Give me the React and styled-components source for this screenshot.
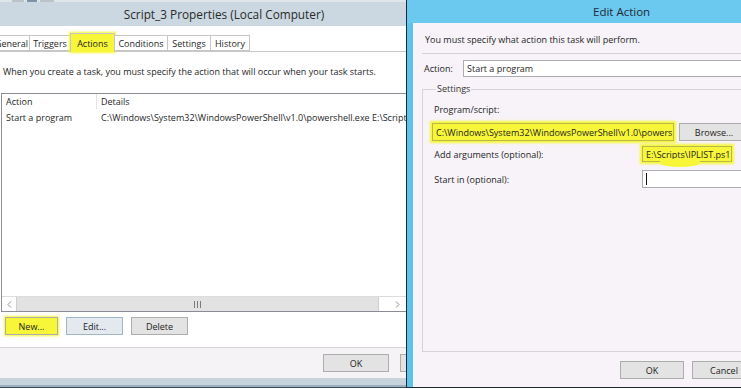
import React from 'react';
import styled, { createGlobalStyle } from 'styled-components';

const GlobalStyle = createGlobalStyle`
    html, body {
        margin: 0;
        padding: 0;
        background: #ffffff;
    }
    body {
        font-family: "Open Sans", "Noto Sans", sans-serif;
        font-size: 9px;
        color: #1f1f1f;
    }
`;

const HL = '#f7f639';

const Desktop = styled.div`
    display: flex;
    width: 741px;
    height: 389px;
    overflow: hidden;
    background: #ffffff;
`;

/* ---------- left: task properties ---------- */

const LeftWindow = styled.div`
    flex: 0 0 406px;
    display: flex;
    flex-direction: column;
    overflow: hidden;
    background: #ffffff;
`;

const TopStrip = styled.div`
    height: 2px;
    display: flex;
    gap: 3px;
    padding-left: 12px;
    background: #dfe6ea;
`;

const StripMark = styled.span`
    width: ${p => p.w}px;
    background: ${p => p.c};
`;

const LeftTitle = styled.div`
    height: 24px;
    display: flex;
    align-items: center;
    justify-content: center;
    padding-left: 42px;
    background: #cbd8e1;
    font-size: 11.8px;
    color: #2a2a2a;
`;

const LeftBody = styled.div`
    display: flex;
    flex-direction: column;
    padding-left: 1px;
`;

const TabRow = styled.div`
    display: flex;
    align-items: flex-end;
    height: 19px;
    margin-top: 6px;
    margin-left: -8px;
    border-bottom: 1px solid #c9c9c9;
`;

const Tab = styled.div`
    height: ${p => (p.selected ? 19 : 16)}px;
    width: ${p => p.w}px;
    flex-shrink: 0;
    box-sizing: border-box;
    display: flex;
    align-items: center;
    justify-content: center;
    border: 1px solid #c6c6c6;
    border-bottom: ${p => (p.selected ? 'none' : '1px solid #c6c6c6')};
    margin-bottom: ${p => (p.selected ? -1 : 0)}px;
    margin-right: -1px;
    background: ${p => (p.selected ? HL : '#ffffff')};
    box-shadow: ${p => (p.selected ? `0 0 2px 1px ${HL}` : 'none')};
    white-space: nowrap;
    position: relative;
`;

const Intro = styled.div`
    margin-top: 13px;
    padding-left: 2px;
    line-height: 14px;
    white-space: nowrap;
`;

const ListView = styled.div`
    margin-top: 14px;
    height: 219px;
    box-sizing: border-box;
    border: 1px solid #8a8d94;
    border-right: none;
    display: flex;
    flex-direction: column;
`;

const ListHeader = styled.div`
    display: flex;
    height: 15px;
    align-items: center;
`;

const ListRowLine = styled.div`
    display: flex;
    height: 16px;
    align-items: center;
`;

const Cell = styled.div`
    flex: 0 0 ${p => p.w || 'auto'};
    ${p => (p.w ? `width: ${p.w};` : '')}
    box-sizing: border-box;
    padding-left: 4px;
    white-space: nowrap;
    overflow: hidden;
    height: 100%;
    display: flex;
    align-items: center;
    border-right: ${p => (p.divider ? '1px solid #e3e3e3' : 'none')};
`;

const ListFill = styled.div`
    flex: 1;
`;

const HScroll = styled.div`
    height: 14px;
    display: flex;
    border-top: 1px solid #dcdcdc;
    background: #ffffff;
`;

const ScrollArrow = styled.div`
    width: ${p => p.w}px;
    display: flex;
    align-items: center;
    justify-content: ${p => p.justify || 'center'};
    padding-right: ${p => p.pr || 0}px;
    box-sizing: border-box;
`;

const ScrollThumb = styled.div`
    flex: 1;
    display: flex;
    align-items: center;
    justify-content: center;
    background: #e2e2e2;
    border-left: 1px solid #cfcfcf;
    border-right: 1px solid #cfcfcf;
`;

const ButtonRow = styled.div`
    display: flex;
    gap: 8px;
    margin-top: 5px;
    padding-left: 4px;
`;

const Button = styled.div`
    width: ${p => p.w}px;
    height: 18px;
    flex-shrink: 0;
    box-sizing: border-box;
    display: flex;
    align-items: center;
    justify-content: center;
    border: 1px solid ${p => (p.focus ? '#9fb6cb' : '#adadad')};
    background: ${p => (p.hl ? HL : p.focus ? '#e3e9ef' : '#e3e3e3')};
    box-shadow: ${p => (p.hl ? `0 0 2px 1px ${HL}` : 'none')};
    color: #222;
`;

const LeftFooter = styled.div`
    margin-top: 12px;
    height: 31px;
    border-top: 1px solid #d8d4da;
    background: #f6f3f7;
    display: flex;
    gap: 11px;
    padding: 6px 0 0 323px;
    box-sizing: border-box;
`;

const BottomStrip = styled.div`
    height: 9px;
    background: #c6d3dc;
    border-bottom: 1px solid #3c4852;
    box-shadow: inset 0 -2px 0 #9fb0bd;
`;

/* ---------- right: edit action ---------- */

const RightWindow = styled.div`
    flex: 0 0 362px;
    height: 388px;
    box-sizing: border-box;
    display: flex;
    flex-direction: column;
    border-left: 1px solid #1b2b3c;
    border-bottom: 1px solid #1b2b3c;
    background: #5ec3ea;
    padding: 0 6px 0 6px;
`;

const RightTitle = styled.div`
    height: 23px;
    display: flex;
    align-items: center;
    padding-left: 186px;
    font-size: 11.5px;
    color: #1d2a35;
    background: #6bc8ee;
    margin: 0 -6px;
`;

const RightBody = styled.div`
    flex: 1;
    display: flex;
    flex-direction: column;
    background: #f7f3f8;
    padding: 10px 9px 0 9px;
`;

const Lead = styled.div`
    padding-left: 3px;
    line-height: 14px;
    white-space: nowrap;
`;

const Rule = styled.div`
    margin-top: 6px;
    border-top: 1px solid #d2d0d3;
`;

const ActionLine = styled.div`
    display: flex;
    align-items: center;
    margin-top: 6px;
    padding-left: 2px;
`;

const FieldLabel = styled.div`
    flex: 0 0 ${p => p.w}px;
    white-space: nowrap;
`;

const Field = styled.div`
    flex: 0 0 ${p => p.w || 'auto'}px;
    ${p => (p.grow ? 'flex: 1;' : '')}
    height: ${p => p.h || 17}px;
    box-sizing: border-box;
    display: flex;
    align-items: center;
    padding-left: 3px;
    border: 1px solid ${p => (p.hl ? '#b9b94a' : '#abadb3')};
    background: ${p => (p.hl ? HL : '#ffffff')};
    box-shadow: ${p => (p.hl ? `0 0 2px 2px ${HL}` : 'none')};
    white-space: nowrap;
    overflow: hidden;
    position: relative;
`;

const Caret = styled.span`
    width: 1px;
    height: 12px;
    background: #111;
`;

const Group = styled.fieldset`
    margin: 5px 0 0 0;
    padding: 7px 0 0 9px;
    border: 1px solid #d6d3d8;
    height: 270px;
    box-sizing: border-box;
    display: flex;
    flex-direction: column;
`;

const Legend = styled.legend`
    padding: 0 1px;
    margin-left: 4px;
    line-height: 14px;
    color: #333;
`;

const GroupLabel = styled.div`
    line-height: 14px;
    padding-left: 2px;
`;

const FieldRow = styled.div`
    display: flex;
    align-items: center;
    gap: ${p => p.gap || 0}px;
    margin-top: ${p => p.mt}px;
`;

const ArgsMark = styled.div`
    position: relative;
    &::after {
        content: '';
        position: absolute;
        left: 18px;
        top: 13px;
        width: 40px;
        height: 8px;
        border-radius: 0 0 50% 50%;
        background: ${HL};
    }
`;

const RightFooter = styled.div`
    display: flex;
    justify-content: flex-end;
    gap: 8px;
    padding: 9px 0 0 0;
    margin-right: -3px;
    height: 34px;
    box-sizing: border-box;
`;

const Chevron = ({ dir }) => (
    <svg width="5" height="7" viewBox="0 0 5 7">
        <path
            d={dir === 'left' ? 'M4 0.5 L1 3.5 L4 6.5' : 'M1 0.5 L4 3.5 L1 6.5'}
            fill="none"
            stroke="#8a8a8a"
            strokeWidth="1"
        />
    </svg>
);

const Grip = () => (
    <svg width="7" height="7" viewBox="0 0 7 7">
        <rect x="0" y="0" width="1" height="7" fill="#7b7b7b" />
        <rect x="3" y="0" width="1" height="7" fill="#7b7b7b" />
        <rect x="6" y="0" width="1" height="7" fill="#7b7b7b" />
    </svg>
);

const tabs = [
    { label: 'General', w: 37 },
    { label: 'Triggers', w: 42 },
    { label: 'Actions', w: 45, selected: true },
    { label: 'Conditions', w: 54 },
    { label: 'Settings', w: 44 },
    { label: 'History', w: 40 },
];

export default function App() {
    return (
        <>
            <GlobalStyle />
            <Desktop>
                <LeftWindow>
                    <TopStrip>
                        <StripMark w={12} c="#b9c3cb" />
                        <StripMark w={10} c="#7d93a8" />
                        <StripMark w={14} c="#b9c3cb" />
                    </TopStrip>
                    <LeftTitle>Script_3 Properties (Local Computer)</LeftTitle>
                    <LeftBody>
                        <TabRow>
                            {tabs.map(t => (
                                <Tab key={t.label} w={t.w} selected={t.selected}>
                                    {t.label}
                                </Tab>
                            ))}
                        </TabRow>
                        <Intro>
                            When you create a task, you must specify the action that will occur when your task starts.
                        </Intro>
                        <ListView>
                            <ListHeader>
                                <Cell w="95px" divider>Action</Cell>
                                <Cell>Details</Cell>
                            </ListHeader>
                            <ListRowLine>
                                <Cell w="95px">Start a program</Cell>
                                <Cell>C:\Windows\System32\WindowsPowerShell\v1.0\powershell.exe E:\Scripts</Cell>
                            </ListRowLine>
                            <ListFill />
                            <HScroll>
                                <ScrollArrow w={14}><Chevron dir="left" /></ScrollArrow>
                                <ScrollThumb><Grip /></ScrollThumb>
                                <ScrollArrow w={27} justify="flex-end" pr={6}><Chevron dir="right" /></ScrollArrow>
                            </HScroll>
                        </ListView>
                        <ButtonRow>
                            <Button w={53} hl>New...</Button>
                            <Button w={57} focus>Edit...</Button>
                            <Button w={57}>Delete</Button>
                        </ButtonRow>
                    </LeftBody>
                    <LeftFooter>
                        <Button w={66}>OK</Button>
                        <Button w={66} />
                    </LeftFooter>
                    <BottomStrip />
                </LeftWindow>

                <RightWindow>
                    <RightTitle>Edit Action</RightTitle>
                    <RightBody>
                        <Lead>You must specify what action this task will perform.</Lead>
                        <Rule />
                        <ActionLine>
                            <FieldLabel w={39}>Action:</FieldLabel>
                            <Field grow>Start a program</Field>
                        </ActionLine>
                        <Group>
                            <Legend>Settings</Legend>
                            <GroupLabel>Program/script:</GroupLabel>
                            <FieldRow mt={6} gap={5}>
                                <Field w={242} h={18} hl>C:\Windows\System32\WindowsPowerShell\v1.0\powers</Field>
                                <Button w={70}>Browse...</Button>
                            </FieldRow>
                            <FieldRow mt={5}>
                                <FieldLabel w={210}>&nbsp;Add arguments (optional):</FieldLabel>
                                <ArgsMark>
                                    <Field w={110} h={16} hl>E:\Scripts\IPLIST.ps1</Field>
                                </ArgsMark>
                            </FieldRow>
                            <FieldRow mt={8}>
                                <FieldLabel w={210}>&nbsp;Start in (optional):</FieldLabel>
                                <Field w={110} h={18}><Caret /></Field>
                            </FieldRow>
                        </Group>
                        <RightFooter>
                            <Button w={64}>OK</Button>
                            <Button w={64}>Cancel</Button>
                        </RightFooter>
                    </RightBody>
                </RightWindow>
            </Desktop>
        </>
    );
}
